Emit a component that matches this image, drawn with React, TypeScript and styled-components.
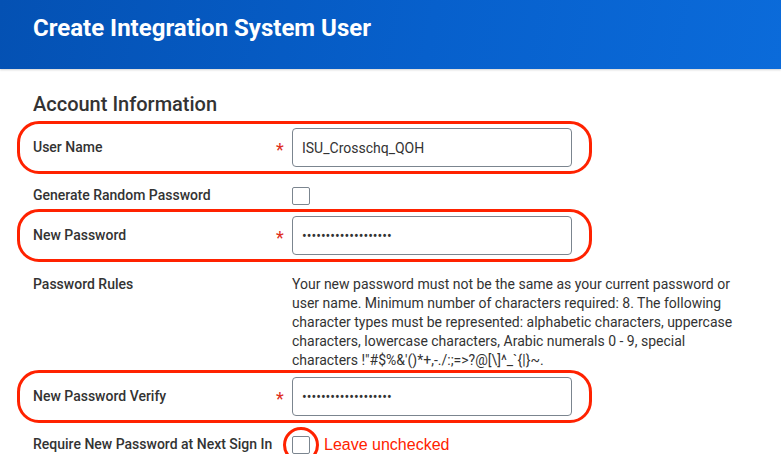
import React from "react";
import styled, { createGlobalStyle } from "styled-components";

const GlobalStyle = createGlobalStyle`
	html, body {
		margin: 0;
		padding: 0;
		background: #ffffff;
	}
	body {
		font-family: Roboto, "Noto Sans", Arial, sans-serif;
		color: #333333;
	}
`;

const Header = styled.header`
	height: 69px;
	padding: 0 33px;
	display: flex;
	align-items: center;
	background: linear-gradient(100deg, #0451b3 0%, #0760cc 55%, #0b6bda 100%);
	box-shadow: 0 1px 2px rgba(0, 0, 0, 0.18);
`;

const Title = styled.h1`
	margin: 0 0 13px;
	font-size: 24px;
	font-weight: 700;
	color: #ffffff;
`;

const Content = styled.main`
	padding: 23px 33px 0;
`;

const SectionTitle = styled.h2`
	margin: 0 0 5px;
	font-size: 20px;
	line-height: 24px;
	font-weight: 500;
	color: #333333;
`;

type RowProps = {
	$outlined?: boolean;
	$top?: number;
	$bottom?: number;
	$align?: "center" | "flex-start";
};

// outlined rows draw the 3px red ring; plain rows give their padding directly
const Row = styled.div<RowProps>`
	display: flex;
	align-items: ${(p) => p.$align || "center"};
	width: max-content;
	margin-left: -16px;
	padding: ${(p) => p.$top ?? 4}px ${(p) => (p.$outlined ? 17 : 20)}px ${(p) => p.$bottom ?? 4}px
		${(p) => (p.$outlined ? 13 : 16)}px;
	border: ${(p) => (p.$outlined ? "3px solid #ff2200" : "0")};
	border-radius: 22px;
`;

const Label = styled.div`
	width: 243px;
	font-size: 14px;
	line-height: 19px;
	font-weight: 500;
	color: #333333;
`;

const Required = styled.span`
	width: 16px;
	font-size: 18px;
	line-height: 18px;
	padding-top: 5px;
	color: #de2e21;
`;

const Spacer = styled.span`
	width: 16px;
`;

const TextInput = styled.input`
	box-sizing: border-box;
	width: 280px;
	height: 39px;
	padding: 0 9px;
	border: 1px solid #7b858f;
	border-radius: 4px;
	font-family: Roboto, "Noto Sans", Arial, sans-serif;
	font-size: 14px;
	color: #333333;
	background: #ffffff;
	outline: none;
`;

const Box = styled.span`
	display: block;
	box-sizing: border-box;
	width: 18px;
	height: 18px;
	border: 1px solid #7b858f;
	border-radius: 2px;
	background: #ffffff;
`;

const Ring = styled.span`
	position: relative;
	display: block;
	&::after {
		content: "";
		position: absolute;
		left: -9px;
		top: -9px;
		width: 30px;
		height: 30px;
		border: 3px solid #ff2200;
		border-radius: 50%;
	}
`;

const Rules = styled.p`
	margin: 0;
	width: 450px;
	font-size: 14px;
	line-height: 19px;
	color: #333333;
`;

const Note = styled.span`
	margin-left: 14px;
	font-family: "Liberation Sans", Arial, sans-serif;
	font-size: 16px;
	color: #ff2200;
`;

const Field = styled.div`
	display: flex;
	align-items: center;
`;

const App = () => {
	return (
		<>
			<GlobalStyle />
			<Header>
				<Title>Create Integration System User</Title>
			</Header>
			<Content>
				<SectionTitle>Account Information</SectionTitle>
				<Row $outlined>
					<Label>User Name</Label>
					<Required>*</Required>
					<TextInput readOnly value="ISU_Crosschq_QOH" />
				</Row>
				<Row $top={12} $bottom={4}>
					<Label>Generate Random Password</Label>
					<Spacer />
					<Box />
				</Row>
				<Row $outlined>
					<Label>New Password</Label>
					<Required>*</Required>
					<TextInput type="password" readOnly value="xxxxxxxxxxxxxxxxxxx" />
				</Row>
				<Row $top={13} $bottom={0} $align="flex-start">
					<Label>Password Rules</Label>
					<Spacer />
					<Rules>
						Your new password must not be the same as your current password or user name. Minimum
						number of characters required: 8. The following character types must be represented:
						alphabetic characters, uppercase characters, lowercase characters, Arabic numerals 0 - 9,
						special characters !"#$%&amp;'()*+,-./:;=&gt;?@[\]^_`{"{"}|{"}"}~.
					</Rules>
				</Row>
				<Row $outlined>
					<Label>New Password Verify</Label>
					<Required>*</Required>
					<TextInput type="password" readOnly value="xxxxxxxxxxxxxxxxxxx" />
				</Row>
				<Row $top={12} $bottom={0}>
					<Label>Require New Password at Next Sign In</Label>
					<Spacer />
					<Field>
						<Ring>
							<Box />
						</Ring>
						<Note>Leave unchecked</Note>
					</Field>
				</Row>
			</Content>
		</>
	);
};

export default App;
